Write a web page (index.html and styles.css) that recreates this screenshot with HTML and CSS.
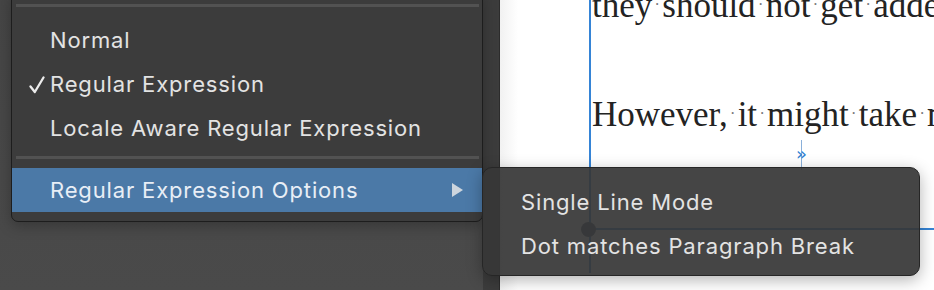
FILE: index.html
```html
<!DOCTYPE html>
<html>
<head>
<meta charset="utf-8">
<link rel="stylesheet" href="styles.css">
</head>
<body>
<div class="screen">
  <div class="panel"></div>
  <div class="strip"></div>
  <div class="doc">
    <div class="frame">
      <p class="line first">they<span class="ws">·</span>should<span class="ws">·</span>not<span class="ws">·</span>get<span class="ws">·</span>added<span class="ws">·</span>to</p>
      <p class="line second">However,<span class="ws">·</span>it<span class="ws">·</span>might<span class="ws">·</span>take<span class="ws">·</span>more</p>
    </div>
    <div class="hguide"></div>
    <div class="anchor"></div>
    <div class="marker"><span class="tick"></span><span class="chev">»</span></div>
  </div>

  <div class="menu">
    <div class="sep"></div>
    <div class="item"><span class="check"></span><span class="label">Normal</span></div>
    <div class="item"><span class="check"><svg width="16" height="18" viewBox="0 0 16 18"><path d="M1.5 10.5 L5.8 16 L14.5 1.5" fill="none" stroke="#ececec" stroke-width="2.3" stroke-linecap="round" stroke-linejoin="round"/></svg></span><span class="label">Regular Expression</span></div>
    <div class="item"><span class="check"></span><span class="label">Locale Aware Regular Expression</span></div>
    <div class="sep sep2"></div>
    <div class="item active"><span class="check"></span><span class="label">Regular Expression Options</span><span class="arrow"></span></div>
  </div>

  <div class="submenu">
    <div class="item sub"><span class="label">Single Line Mode</span></div>
    <div class="item sub"><span class="label">Dot matches Paragraph Break</span></div>
  </div>
</div>
</body>
</html>
```
FILE: styles.css
```css
html, body {
  margin: 0;
  padding: 0;
  background: #474747;
}
.screen {
  position: relative;
  width: 934px;
  height: 290px;
  overflow: hidden;
  display: flex;
  font-family: Inter, "Noto Sans", sans-serif;
}
.panel {
  flex: 0 0 483px;
  background: linear-gradient(180deg, #454545 0%, #4a4a4a 100%);
}
.strip {
  flex: 0 0 16px;
  background: #3c3c3c;
  border-right: 1px solid #2c2c2c;
}
.doc {
  position: relative;
  flex: 1 1 auto;
  min-width: 0;
  overflow: hidden;
  background: linear-gradient(90deg, #f1f1f1 0px, #ffffff 18px);
  padding-left: 89px;
}
.frame {
  height: 100%;
  border-left: 2px solid #3584d6;
  font-family: "Liberation Serif", "Times New Roman", serif;
  font-size: 35px;
  line-height: 44px;
  color: #232323;
  white-space: nowrap;
}
.line {
  margin: 0;
  padding-left: 1px;
}
.line.first {
  margin-top: -17px;
}
.line.second {
  margin-top: 64px;
}
.ws {
  color: #777777;
  font-size: 16px;
  display: inline-block;
  width: 10px;
  text-align: center;
  vertical-align: 7px;
}
.hguide {
  position: absolute;
  left: 90px;
  right: 0;
  top: 228px;
  height: 2px;
  background: #3584d6;
}
.anchor {
  position: absolute;
  left: 81px;
  top: 222px;
  width: 15px;
  height: 15px;
  border-radius: 50%;
  background: #3c4e60;
}
.marker {
  position: absolute;
  left: 296px;
  top: 140px;
  width: 10px;
  height: 30px;
}
.tick {
  position: absolute;
  left: 5px;
  top: 0;
  width: 1px;
  height: 30px;
  background: #8ab0da;
}
.chev {
  position: absolute;
  left: 0;
  top: 4px;
  font-family: "DejaVu Sans", sans-serif;
  font-size: 18px;
  line-height: 20px;
  color: #2d7fd2;
}
.menu {
  position: absolute;
  left: 11px;
  top: -8px;
  width: 470px;
  background: #3c3c3c;
  border: 1px solid #1d1d1d;
  border-radius: 0 0 7px 7px;
  padding: 11px 0 9px;
  box-shadow: 0 4px 14px rgba(0,0,0,0.25);
}
.sep {
  height: 3px;
  margin: 0 3px 11px 4px;
  background: #525252;
}
.sep2 {
  margin-top: 6px;
  margin-bottom: 9px;
}
.item {
  display: flex;
  align-items: center;
  height: 44px;
  color: #e3e3e3;
  font-size: 22px;
  letter-spacing: 0.85px;
}
.check {
  width: 38px;
  display: flex;
  justify-content: flex-end;
  padding-right: 5px;
  box-sizing: border-box;
}
.check svg {
  display: block;
  margin-top: 1px;
}
.label {
  flex: 1;
}
.item.active {
  background: #4b79a7;
  color: #e8eef6;
}
.arrow {
  width: 0;
  height: 0;
  border-top: 7.5px solid transparent;
  border-bottom: 7.5px solid transparent;
  border-left: 11px solid #cdd5de;
  margin-right: 19px;
}
.submenu {
  position: absolute;
  left: 482px;
  top: 167px;
  width: 438px;
  height: 109px;
  box-sizing: border-box;
  padding-top: 12px;
  background: rgba(55,55,55,0.93);
  border: 1px solid #262626;
  border-radius: 10px;
  box-shadow: 0 4px 16px rgba(0,0,0,0.3);
}
.item.sub {
  padding-left: 38px;
}
```
